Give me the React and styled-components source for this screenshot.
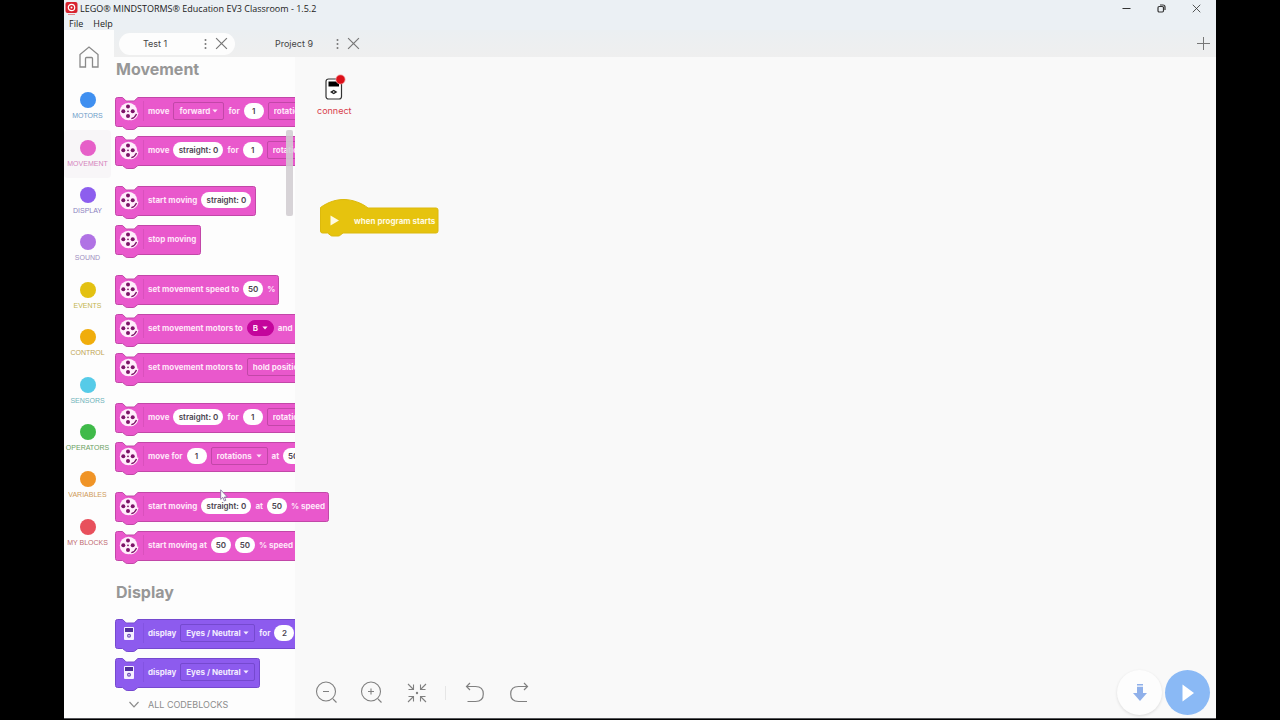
import React from 'react';
import styled, { createGlobalStyle, css } from 'styled-components';

const GlobalStyle = createGlobalStyle`
  * { box-sizing: border-box; }
  body { margin: 0; background: #000; }
  button, input, select { font: inherit; color: inherit; margin: 0; padding: 0; border: 0; background: none; }
  button { cursor: pointer; }
  h2, ul { margin: 0; padding: 0; list-style: none; }
  svg { display: block; }
`;

const Page = styled.div`
  min-height: 100vh;
  padding: 0 5% 1px;
  display: flex;
  background: #000;
  font-family: 'Inter', 'Liberation Sans', sans-serif;
`;

const AppWindow = styled.div`
  flex: 1;
  min-width: 0;
  display: flex;
  flex-direction: column;
  background: #fdfdfd;
  border-bottom: 1px solid #55565a;
`;

const TopBars = styled.header`
  background: #ebf0f4;
  color: #222;
  font-family: 'Open Sans', 'Noto Sans', sans-serif;
  font-size: 9px;
`;

const TitleBar = styled.div`
  height: 17px;
  display: flex;
  align-items: center;
  padding-left: 1px;
  line-height: 16px;
`;

const Title = styled.span`
  flex: 1;
  padding-left: 2px;
  white-space: nowrap;
`;

const WindowButton = styled.button`
  width: 35px;
  height: 17px;
  display: grid;
  place-items: center;
  color: #333;
  &:last-child { margin-right: 2px; }
`;

const MenuBar = styled.nav`
  height: 13px;
  display: flex;
  gap: 10px;
  padding-left: 5px;
  line-height: 14px;
`;

const Main = styled.div`
  flex: 1;
  display: flex;
  background: #ebeef1;
`;

const Sidebar = styled.nav`
  flex: 0 0 50px;
  display: flex;
  flex-direction: column;
  background: #fdfdfd;
`;

const HomeButton = styled.button`
  height: 53px;
  display: grid;
  place-items: center;
  color: #8a8a8a;
`;

const CategoryList = styled.ul`
  min-height: 474px;
  display: flex;
  flex-direction: column;
  padding-right: 3px;
`;

const CategoryItem = styled.li`
  flex: 1;
  display: flex;
`;

const CategoryButton = styled.button`
  flex: 1;
  display: flex;
  flex-direction: column;
  align-items: center;
  justify-content: center;
  gap: 3px;
  border-radius: 4px;
  background: ${(p) => (p.$active ? '#f8f6f8' : 'transparent')};
  color: ${(p) => p.$text};
  font-family: 'Liberation Sans', sans-serif;
  font-size: 7px;
  line-height: 10px;
  white-space: nowrap;
  &::before {
    content: '';
    width: 16px;
    height: 16px;
    border-radius: 50%;
    background: ${(p) => p.$dot};
  }
`;

const Workspace = styled.div`
  flex: 1;
  min-width: 0;
  display: flex;
  flex-direction: column;
`;

const TabBar = styled.div`
  height: 27px;
  display: flex;
  align-items: center;
  gap: 30px;
  padding: 0 5px;
  background: linear-gradient(#ebeff2, #efefef);
`;

const Tab = styled.div`
  width: ${(p) => p.$width}px;
  height: 22px;
  display: flex;
  align-items: center;
  border-radius: 11px;
  background: ${(p) => (p.$active ? '#fdfdfd' : 'transparent')};
  color: #444;
  font-size: 9px;
`;

const TabLabel = styled.button`
  flex: 1;
  padding-right: 8px;
  white-space: nowrap;
`;

const TabIcon = styled.button`
  width: ${(p) => (p.$narrow ? 12 : 20)}px;
  height: 22px;
  display: grid;
  place-items: center;
  color: #777;
  &:last-child { margin-right: 4px; }
`;

const AddTab = styled(TabIcon)`
  margin-left: auto;
  &:last-child { margin-right: -2px; }
`;

const Content = styled.div`
  flex: 1;
  display: flex;
`;

const Palette = styled.section`
  position: relative;
  z-index: 1;
  flex: 0 0 181px;
  min-width: 0;
  display: flex;
  flex-direction: column;
  padding-left: 1px;
  background: #fdfdfd;
`;

const SectionTitle = styled.h2`
  padding: ${(p) => (p.$first ? '0 0 16px 1px' : '16px 0 15px 1px')};
  font-size: 16px;
  line-height: 24px;
  font-weight: 700;
  color: #979797;
`;

const Groups = styled.div`
  display: flex;
  flex-direction: column;
  gap: 17px;
`;

const Group = styled.ul`
  display: flex;
  flex-direction: column;
  gap: 6px;
`;

const Slot = styled.li`
  overflow: ${(p) => (p.$open ? 'visible' : 'hidden')};
`;

const themes = {
  movement: { fill: '#e958cc', line: '#c247a8', deep: '#c4059c', text: '#ffe6f9' },
  display: { fill: '#8d5bee', line: '#7549cf', deep: '#6b3fc4', text: '#f3ecff' },
  events: { fill: '#e6c30e', line: '#dcb90c', deep: '#cba900', text: '#fffbe0' },
};

const BlockBox = styled.div`
  position: relative;
  width: ${(p) => p.$width}px;
  height: 33px;
  padding-bottom: 5px;
  display: flex;
  align-items: center;
  gap: 4px;
  color: ${(p) => p.$tone.text};
  font-size: 8px;
  font-weight: 700;
  line-height: 12px;
  white-space: nowrap;
`;

const BlockOutline = styled.svg`
  position: absolute;
  inset: 0;
`;

const BlockIcon = styled.span`
  position: relative;
  width: 29px;
  height: 20px;
  flex: none;
  display: grid;
  place-items: center;
  border-right: 1px solid ${(p) => p.$tone.line}66;
`;

const Word = styled.span`
  position: relative;
`;

const Value = styled.input`
  position: relative;
  flex: none;
  width: ${(p) => (p.$wide ? 50 : 20)}px;
  height: 16px;
  border-radius: 8px;
  background: #fff;
  color: #4b4450;
  font-weight: 600;
  text-align: center;
`;

const Choice = styled.span`
  position: relative;
  flex: none;
  width: ${(p) => p.$width}px;
  height: ${(p) => (p.$round ? 16 : 18)}px;
  display: flex;
  align-items: center;
  border: 1px solid ${(p) => (p.$round ? p.$tone.deep : p.$tone.line)};
  border-radius: ${(p) => (p.$round ? 8 : 2)}px;
  background: ${(p) => (p.$round ? p.$tone.deep : 'transparent')};
  select {
    appearance: none;
    width: 100%;
    height: 100%;
    padding-left: 5px;
    outline: 0;
  }
  svg {
    position: absolute;
    right: 5px;
    pointer-events: none;
  }
`;

const PaletteFooter = styled.button`
  flex: 1;
  display: flex;
  align-items: center;
  gap: 9px;
  padding-left: 14px;
  color: #8c8c8c;
  font-size: 9px;
`;

const ScrollThumb = styled.span`
  position: absolute;
  top: 73px;
  right: 2px;
  width: 7px;
  height: 86px;
  border-radius: 2px;
  background: rgba(210, 205, 210, 0.88);
`;

const Pointer = styled.svg`
  position: absolute;
  left: 106px;
  top: 432px;
`;

const Canvas = styled.main`
  position: relative;
  flex: 1;
  min-width: 0;
  display: flex;
  flex-direction: column;
  align-items: flex-start;
  justify-content: space-between;
  background: #f9f9f9;
`;

const ConnectButton = styled.button`
  margin: 16px 0 0 22px;
  display: flex;
  flex-direction: column;
  align-items: center;
  gap: 5px;
  color: #d8404c;
  font-size: 9px;
  line-height: 12px;
`;

const ProgramStack = styled.div`
  position: absolute;
  left: 25px;
  top: 142px;
  width: 120px;
  height: 38px;
  display: flex;
  align-items: center;
  padding: 5px 0 0 34px;
  color: ${themes.events.text};
  font-size: 8px;
  font-weight: 700;
  white-space: nowrap;
`;

const CanvasTools = styled.div`
  align-self: stretch;
  display: flex;
  align-items: center;
  padding: 0 6px 3px 20px;
`;

const ToolButton = styled.button`
  width: 24px;
  height: 24px;
  margin-right: 21px;
  display: grid;
  place-items: center;
  color: #808080;
`;

const ToolDivider = styled.span`
  width: 1px;
  height: 14px;
  margin: 0 17px 0 -5px;
  background: #e6e6e6;
`;

const RoundButton = styled.button`
  width: 45px;
  height: 45px;
  display: grid;
  place-items: center;
  border-radius: 50%;
  ${(p) =>
    p.$primary
      ? css`background: #8ab9f5; color: #fff;`
      : css`
          margin: 0 3px 0 auto;
          background: #fdfdfd;
          color: #8fb0ea;
          box-shadow: 0 1px 3px rgba(0, 0, 0, 0.12);
        `}
`;

const Caret = () => (
  <svg width="6" height="4" viewBox="0 0 6 4" aria-hidden="true">
    <path d="M.4.4h5.2L3 3.4z" fill="currentColor" />
  </svg>
);

const WheelIcon = () => (
  <svg width="20" height="20" viewBox="0 0 20 20" aria-hidden="true">
    <circle cx="9.500" cy="10.500" r="8.700" fill="#ffeefb" />
    <path d="M11.500 18.500c3.800-.6 6.400-3.200 7-7" fill="none" stroke="#ffeefb" strokeWidth="2" />
    <g fill="#7d1368">
      <circle cx="9" cy="5.500" r="2" />
      <circle cx="9" cy="15" r="2" />
      <circle cx="4.300" cy="10.300" r="2" />
      <circle cx="13.700" cy="10.300" r="2" />
      <circle cx="9" cy="10.300" r=".9" />
    </g>
    <path d="M12.300 17.700c2.400-.6 4.300-2.400 5.200-4.700" fill="none" stroke="#7d1368" strokeWidth="1.300" />
  </svg>
);

const BrickIcon = () => (
  <svg width="12" height="16" viewBox="0 0 12 16" aria-hidden="true">
    <rect x="1" y="2" width="10" height="13" rx="1" fill="#f6f0ff" />
    <rect x="2" y="3" width="8" height="4" fill="#50309a" />
    <circle cx="6" cy="10.700" r="2" fill="#6f4fb8" />
    <circle cx="6" cy="10.700" r=".8" fill="#f6f0ff" />
  </svg>
);

const blockPath = (w) =>
  `M.5 2.500q0-2 2-2h5l3.200 3q.6.500 1.500.5h6q.9 0 1.500-.5l3.200-3H${w - 2.5}q2 0 2 2v25q0 2-2 2H22.900l-3.200 2.500q-.6.500-1.500.5h-6q-.9 0-1.500-.5l-3.200-2.500h-5q-2 0-2-2z`;

function Block({ kind = 'movement', width, open, parts }) {
  const tone = themes[kind];
  return (
    <Slot $open={open}>
      <BlockBox $width={width} $tone={tone}>
        <BlockOutline width={width} height="33" aria-hidden="true">
          <path d={blockPath(width)} fill={tone.fill} stroke={tone.line} />
        </BlockOutline>
        <BlockIcon $tone={tone}>{kind === 'display' ? <BrickIcon /> : <WheelIcon />}</BlockIcon>
        {parts.map((part, i) => {
          if (typeof part === 'string') return <Word key={i}>{part}</Word>;
          if (part.value) {
            return <Value key={i} $wide={part.wide} defaultValue={part.value} aria-label={part.name} />;
          }
          return (
            <Choice key={i} $width={part.width} $round={part.round} $tone={tone}>
              <select aria-label={part.name} defaultValue={part.choice}>
                <option>{part.choice}</option>
              </select>
              <Caret />
            </Choice>
          );
        })}
      </BlockBox>
    </Slot>
  );
}

const num = (value, name) => ({ value, name });
const steer = { value: 'straight: 0', name: 'steering', wide: true };
const pick = (choice, width, name, round) => ({ choice, width, name, round });
const rotations = pick('rotations', 57, 'unit');

const movementGroups = [
  [
    { width: 240, parts: ['move', pick('forward', 51, 'direction'), 'for', num('1', 'amount'), rotations] },
    { width: 240, parts: ['move', steer, 'for', num('1', 'amount'), rotations] },
  ],
  [
    { width: 141, parts: ['start moving', steer] },
    { width: 86, parts: ['stop moving'] },
  ],
  [
    { width: 164, parts: ['set movement speed to', num('50', 'speed'), '%'] },
    { width: 240, parts: ['set movement motors to', pick('B', 27, 'left motor', true), 'and', pick('C', 27, 'right motor', true)] },
    { width: 240, parts: ['set movement motors to', pick('hold position', 70, 'stop mode')] },
  ],
  [
    { width: 300, parts: ['move', steer, 'for', num('1', 'amount'), rotations] },
    { width: 300, parts: ['move for', num('1', 'amount'), rotations, 'at', num('50', 'left speed'), num('50', 'right speed')] },
  ],
  [
    { width: 214, open: true, parts: ['start moving', steer, 'at', num('50', 'speed'), '% speed'] },
    { width: 190, parts: ['start moving at', num('50', 'left speed'), num('50', 'right speed'), '% speed'] },
  ],
];

const displayBlocks = [
  { width: 240, parts: ['display', pick('Eyes / Neutral', 75, 'image'), 'for', num('2', 'seconds')] },
  { width: 145, parts: ['display', pick('Eyes / Neutral', 75, 'image')] },
];

const categories = [
  ['MOTORS', '#3f8ff0', '#6d9cc8'],
  ['MOVEMENT', '#e65fc8', '#d583bd'],
  ['DISPLAY', '#8d5eee', '#8c82bd'],
  ['SOUND', '#b072e4', '#a08fc0'],
  ['EVENTS', '#e3c112', '#c3b54e'],
  ['CONTROL', '#f0ad0c', '#bda350'],
  ['SENSORS', '#56cbe8', '#6fb3ba'],
  ['OPERATORS', '#3fba49', '#6a9f62'],
  ['VARIABLES', '#f09426', '#cf9a58'],
  ['MY BLOCKS', '#e8505c', '#bf6a70'],
];

const CloseIcon = ({ size }) => (
  <svg width={size} height={size} viewBox="0 0 12 12" fill="none" stroke="currentColor" strokeWidth="1.100" aria-hidden="true">
    <path d="M1 1l10 10M11 1L1 11" />
  </svg>
);

const DotsIcon = () => (
  <svg width="3" height="12" viewBox="0 0 3 12" fill="currentColor" aria-hidden="true">
    <circle cx="1.500" cy="2" r="1" />
    <circle cx="1.500" cy="6" r="1" />
    <circle cx="1.500" cy="10" r="1" />
  </svg>
);

const tools = {
  'Zoom out': 'M18 18l3.500 3.500M8 10.500h6',
  'Zoom in': 'M18 18l3.500 3.500M8 10.500h6M11 7.500v6',
};

function FileTab({ name, width, active }) {
  return (
    <Tab $width={width} $active={active}>
      <TabLabel>{name}</TabLabel>
      <TabIcon $narrow aria-label={`${name} options`}><DotsIcon /></TabIcon>
      <TabIcon aria-label={`Close ${name}`}><CloseIcon size={13} /></TabIcon>
    </Tab>
  );
}

export default function App() {
  return (
    <Page>
      <GlobalStyle />
      <AppWindow>
        <TopBars>
          <TitleBar>
            <svg width="13" height="14" viewBox="0 0 13 14" aria-hidden="true">
              <rect x=".5" y="0" width="12" height="11" rx="2" fill="#d8232f" />
              <circle cx="6.500" cy="5.500" r="3.200" fill="none" stroke="#fff" strokeWidth="1.200" />
              <circle cx="6.500" cy="5.500" r="1" fill="#fff" />
              <path d="M3 12.500h7" stroke="#e58a90" strokeWidth="1" />
            </svg>
            <Title>LEGO® MINDSTORMS® Education EV3 Classroom - 1.5.2</Title>
            <WindowButton aria-label="Minimize">
              <svg width="9" height="9" viewBox="0 0 9 9" stroke="currentColor"><path d="M.5 4.500h8" /></svg>
            </WindowButton>
            <WindowButton aria-label="Restore">
              <svg width="9" height="9" viewBox="0 0 9 9" fill="none" stroke="currentColor" strokeWidth="1.200">
                <rect x="1" y="2.500" width="5.500" height="5.500" rx="1.200" />
                <path d="M3 1h3q2 0 2 2v3" />
              </svg>
            </WindowButton>
            <WindowButton aria-label="Close"><CloseIcon size={9} /></WindowButton>
          </TitleBar>
          <MenuBar>
            <span>File</span>
            <span>Help</span>
          </MenuBar>
        </TopBars>
        <Main>
          <Sidebar>
            <HomeButton aria-label="Home">
              <svg width="20" height="22" viewBox="0 0 20 22" fill="none" stroke="currentColor" strokeWidth="1.300">
                <path d="M1 21V8.500L10 1l9 7.500V21h-5.500v-8.500q0-1-1-1h-5q-1 0-1 1V21z" />
              </svg>
            </HomeButton>
            <CategoryList>
              {categories.map(([name, dot, text]) => (
                <CategoryItem key={name}>
                  <CategoryButton $dot={dot} $text={text} $active={name === 'MOVEMENT'}>{name}</CategoryButton>
                </CategoryItem>
              ))}
            </CategoryList>
          </Sidebar>
          <Workspace>
            <TabBar>
              <FileTab name="Test 1" width={116} active />
              <FileTab name="Project 9" width={102} />
              <AddTab aria-label="New project">
                <svg width="13" height="13" viewBox="0 0 13 13" stroke="currentColor"><path d="M6.500 0v13M0 6.500h13" /></svg>
              </AddTab>
            </TabBar>
            <Content>
              <Palette>
                <SectionTitle $first>Movement</SectionTitle>
                <Groups>
                  {movementGroups.map((blocks, g) => (
                    <Group key={g}>
                      {blocks.map((block, i) => <Block key={i} {...block} />)}
                    </Group>
                  ))}
                </Groups>
                <SectionTitle>Display</SectionTitle>
                <Group>
                  {displayBlocks.map((block, i) => <Block key={i} kind="display" {...block} />)}
                </Group>
                <PaletteFooter>
                  <svg width="10" height="7" viewBox="0 0 10 7" fill="none" stroke="currentColor" strokeWidth="1.200">
                    <path d="M.5 1L5 5.800 9.500 1" />
                  </svg>
                  ALL CODEBLOCKS
                </PaletteFooter>
                <ScrollThumb />
                <Pointer width="8" height="13" viewBox="0 0 8 13" aria-hidden="true">
                  <path d="M.7.8v9.600l2.200-2 1.500 3.600 1.500-.7L4.400 8h2.900z" fill="#fff" stroke="#7c6a98" strokeWidth=".8" />
                </Pointer>
              </Palette>
              <Canvas>
                <ConnectButton>
                  <svg width="26" height="27" viewBox="0 0 26 27" aria-hidden="true">
                    <rect x="5" y="6" width="15.500" height="20" rx="2.500" fill="#fff" stroke="#333" strokeWidth="1.200" />
                    <rect x="7.500" y="8.500" width="10.500" height="5" fill="#000" />
                    <path d="M9 19l3.700-2.300 3.700 2.300-3.700 2.300z" fill="#222" />
                    <circle cx="12.700" cy="19" r=".8" fill="#fff" />
                    <circle cx="19.500" cy="6.500" r="5" fill="#f29a9c" />
                    <circle cx="19.500" cy="6.500" r="4.200" fill="#dc1019" />
                  </svg>
                  connect
                </ConnectButton>
                <ProgramStack>
                  <BlockOutline width="120" height="38" aria-hidden="true">
                    <path
                      d="M.5 8.500C8 3 16 .5 24 .5s18 3.500 24 8.500h68q2 0 2 2v21q0 2-2 2H23l-3.200 2.500q-.6.500-1.500.5h-6q-.9 0-1.500-.5L7.600 34H2.500q-2 0-2-2z"
                      fill={themes.events.fill}
                      stroke={themes.events.line}
                    />
                    <path d="M10.500 16.500l8.500 5-8.500 5z" fill="#fffbe0" />
                  </BlockOutline>
                  <Word>when program starts</Word>
                </ProgramStack>
                <CanvasTools>
                  {Object.entries(tools).map(([label, d]) => (
                    <ToolButton key={label} aria-label={label}>
                      <svg width="24" height="24" viewBox="0 0 24 24" fill="none" stroke="currentColor" strokeWidth="1.100">
                        <circle cx="11" cy="10.500" r="9.500" />
                        <path d={d} />
                      </svg>
                    </ToolButton>
                  ))}
                  <ToolButton aria-label="Center blocks">
                    <svg width="20" height="20" viewBox="0 0 20 20" fill="none" stroke="currentColor" strokeWidth="1.100">
                      <path d="M1 1l5 5M6.500 1.500v5h-5M19 1l-5 5M13.500 1.500v5h5M1 19l5-5M6.500 18.500v-5h-5M19 19l-5-5M13.500 18.500v-5h5" />
                      <circle cx="10" cy="10" r="1.200" fill="currentColor" stroke="none" />
                    </svg>
                  </ToolButton>
                  <ToolDivider />
                  <ToolButton aria-label="Undo">
                    <svg width="20" height="22" viewBox="0 0 20 22" fill="none" stroke="currentColor" strokeWidth="1.200">
                      <path d="M5 1L1.500 4.500 5 8M1.500 4.500H10.500q7.800 0 7.800 7.500t-7.800 7.500H2.500" />
                    </svg>
                  </ToolButton>
                  <ToolButton aria-label="Redo">
                    <svg width="20" height="22" viewBox="0 0 20 22" fill="none" stroke="currentColor" strokeWidth="1.200">
                      <path d="M14 1l3.500 3.500L14 8M17.500 4.500H8.500Q.7 4.500.7 12t7.800 7.500h8.500" />
                    </svg>
                  </ToolButton>
                  <RoundButton aria-label="Download">
                    <svg width="14" height="18" viewBox="0 0 14 18" fill="currentColor">
                      <path d="M4 0h6v1.500H4zM4 2.800h6V9h4l-7 8-7-8h4z" />
                    </svg>
                  </RoundButton>
                  <RoundButton $primary aria-label="Run program">
                    <svg width="14" height="18" viewBox="0 0 14 18" fill="currentColor">
                      <path d="M1.500.5L13 9 1.500 17.500z" />
                    </svg>
                  </RoundButton>
                </CanvasTools>
              </Canvas>
            </Content>
          </Workspace>
        </Main>
      </AppWindow>
    </Page>
  );
}
